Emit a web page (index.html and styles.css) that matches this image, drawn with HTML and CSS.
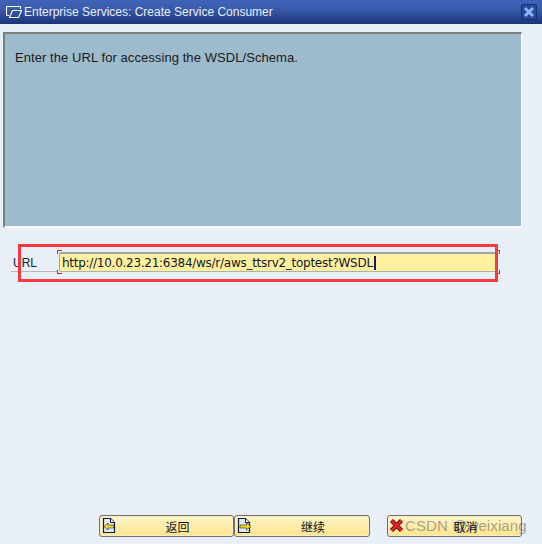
FILE: index.html
```html
<!DOCTYPE html>
<html>
<head>
<meta charset="utf-8">
<title>Enterprise Services</title>
<link rel="stylesheet" href="styles.css">
</head>
<body>
<div class="dialog">
  <header class="titlebar">
    <svg class="title-icon" width="16" height="12" viewBox="0 0 16 12"><path d="M14.5 3V.5H.5V9.5H3M3.5 11.5L6.5 4.5H15.5L12.5 11.5H3.5Z" fill="none" stroke="#fff" stroke-width="1.1"/></svg>
    <span class="title-text">Enterprise Services: Create Service Consumer</span>
    <span class="close"><svg width="12" height="12" viewBox="0 0 12 12"><path d="M2 2L10 10M10 2L2 10" stroke="#8fb4ff" stroke-width="3"/></svg></span>
  </header>
  <main class="content">
    <section class="info">Enter the URL for accessing the WSDL/Schema.</section>
    <div class="url-row">
      <label class="url-label">URL</label>
      <div class="url-field">
        <i class="req req-tl"></i><i class="req req-bl"></i><i class="req req-tr"></i><i class="req req-br"></i>
        <div class="url-input">http://10.0.23.21:6384/ws/r/aws_ttsrv2_toptest?WSDL<span class="caret"></span></div>
      </div>
      <div class="highlight"></div>
    </div>
  </main>
  <footer class="actions">
    <button class="btn btn-back">
      <svg class="btn-icon" width="15" height="15" viewBox="0 0 15 15"><path d="M1.5 .5H8.5L12.5 4.5V14.5H1.5Z" fill="#dfe8f6" stroke="#101a44" stroke-width="1.2"/><path d="M8.5 .5V4.5H12.5" fill="#fff" stroke="#101a44"/><path d="M2 8.5L6 5V7H11.5V10H6V12Z" fill="#f8dc10" stroke="#222" stroke-width=".6"/></svg>
      <span>返回</span>
    </button>
    <button class="btn btn-next">
      <svg class="btn-icon" width="15" height="15" viewBox="0 0 15 15"><path d="M1.5 .5H8.5L12.5 4.5V14.5H1.5Z" fill="#dfe8f6" stroke="#101a44" stroke-width="1.2"/><path d="M8.5 .5V4.5H12.5" fill="#fff" stroke="#101a44"/><path d="M14 8.5L9.5 5V7H3V10H9.5V12Z" fill="#f8dc10" stroke="#222" stroke-width=".6"/></svg>
      <span>继续</span>
    </button>
    <button class="btn btn-cancel">
      <svg class="btn-icon btn-icon-x" width="15" height="15" viewBox="0 0 15 15"><path d="M2.5 2.5L12.5 12.5M12.5 2.5L2.5 12.5" stroke="#4a0a18" stroke-width="4.4"/><path d="M2.5 2.5L12.5 12.5M12.5 2.5L2.5 12.5" stroke="#e8202c" stroke-width="2.6"/></svg>
      <em class="watermark">CSDN @weixiang</em>
      <span class="btn-label">取消</span>
    </button>
  </footer>
</div>
</body>
</html>
```
FILE: styles.css
```css
* { box-sizing: border-box; }
html, body { margin: 0; height: 100%; }
body { background: #e8eff6; font-family: "Liberation Sans", Arial, "Noto Sans CJK SC", sans-serif; overflow: hidden; }
.dialog { width: 542px; height: 544px; display: flex; flex-direction: column; }
.titlebar { height: 24px; flex: none; display: flex; align-items: center; padding: 0 5px 1px 6px; color: #e8eefc; font-size: 12px; background: linear-gradient(#3f63b8 0%, #3a5cad 35%, #1f3c80 90%, #1b3472 100%); }
.title-icon { flex: none; margin-right: 2px; }
.title-text { flex: 1; }
.close { width: 16px; height: 16px; border: 1px solid #16306e; border-radius: 2px; background: #2a4a96; display: flex; align-items: center; justify-content: center; }
.content { flex: 1; display: flex; flex-direction: column; padding: 8px 20px 0 3px; }
.info { height: 196px; flex: none; background: #9ebbcd; border-top: 2px solid #7d7d7d; border-left: 2px solid #7d7d7d; border-right: 1px solid #fff; border-bottom: 2px solid #f4f8fc; padding: 16px 10px; font-size: 13px; letter-spacing: .07px; color: #1a1a1a; }
.url-row { position: relative; display: flex; align-items: flex-start; height: 24px; margin-top: 22px; margin-left: 8px; }
.url-label { width: 47px; height: 22px; padding: 6px 0 0 2px; font-size: 12px; color: #14233c; border-bottom: 1px solid #b5b9bf; flex: none; line-height: 14px; }
.url-field { position: relative; width: 443px; height: 24px; flex: none; margin-left: -1px; }
.url-input { position: absolute; left: 2px; right: 3px; top: 2px; height: 20px; background: #fff09f; border-top: 2px solid #a0a4a8; border-bottom: 1px solid #a8b0b8; border-left: 1px solid #a0a4a8; font-family: "DejaVu Sans", sans-serif; font-size: 12px; line-height: 19px; padding-left: 2px; color: #10182c; white-space: nowrap; border-radius: 2px 0 0 2px; letter-spacing: -.27px; }
.caret { display: inline-block; width: 2px; height: 14px; background: #101c60; vertical-align: -3px; margin-left: 1px; }
.req { position: absolute; width: 5px; height: 4px; border: 0 solid #cc2030; }
.req-tl { left: 0; top: 0; border-top-width: 1px; border-left-width: 1px; }
.req-bl { left: 0; bottom: 0; border-bottom-width: 1px; border-left-width: 1px; }
.req-tr { right: 0; top: 0; border-top-width: 1px; border-right-width: 1px; }
.req-br { right: 0; bottom: 0; border-bottom-width: 1px; border-right-width: 1px; }
.highlight { position: absolute; left: 7px; top: -6px; width: 480px; height: 38px; border: 3px solid #f53a3f; pointer-events: none; }
.actions { flex: none; height: 29px; display: flex; padding: 0 0 0 99px; align-items: flex-start; }
.btn { position: relative; height: 22px; display: flex; align-items: center; justify-content: center; margin: 0; padding: 0 0 0 22px; background: linear-gradient(#fff6cc, #ffeaa0 65%, #ffe48c); border: 1px solid #6f6f6f; border-radius: 3px; box-shadow: inset 0 0 0 1px #f8eec4; font-family: "Noto Sans CJK SC", sans-serif; font-size: 12px; color: #111; }
.btn-label { position: relative; }
.btn-icon { position: absolute; left: 2px; top: 2px; }
.btn-icon-x { left: 1px; }
.btn-back { width: 135px; }
.btn-next { width: 136px; margin-right: 17px; }
.btn-cancel { width: 135px; }
.watermark { position: absolute; left: 17px; top: 0; font-style: normal; font-family: "Liberation Sans", Arial, sans-serif; font-size: 15px; line-height: 20px; color: rgba(110,110,110,.62); white-space: nowrap; letter-spacing: .1px; }
```
